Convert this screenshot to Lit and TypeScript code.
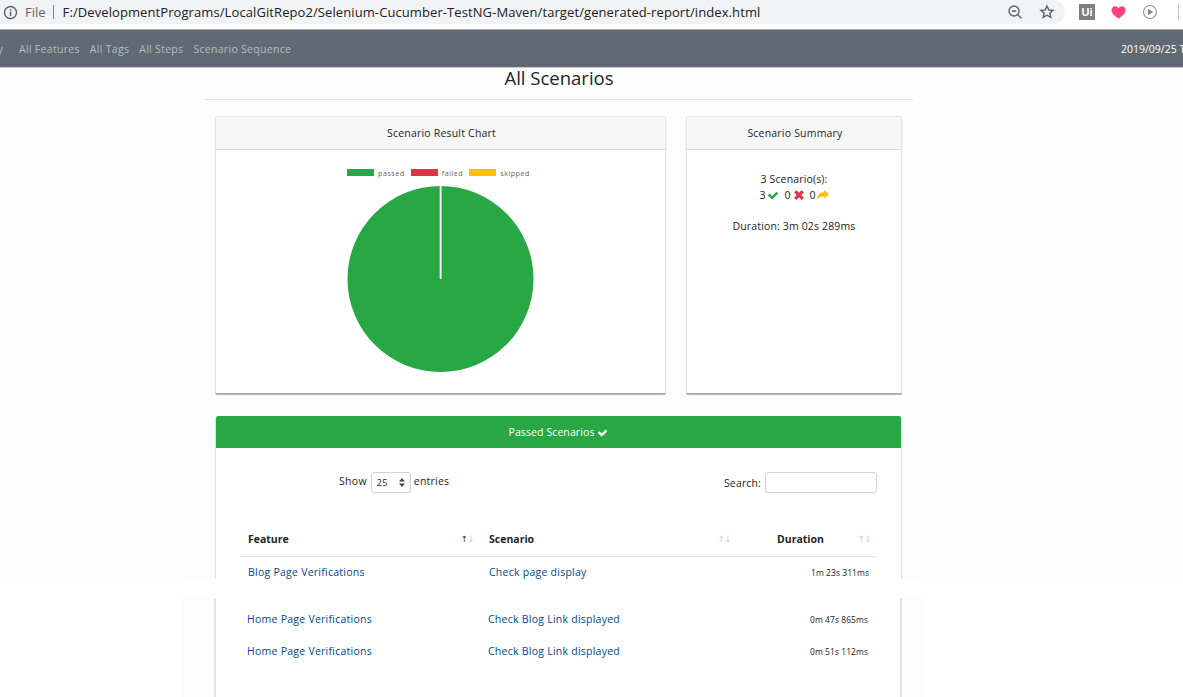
import { LitElement, html, css, svg } from "lit";
import { customElement } from "lit/decorators.js";

const check = html`<svg class="ic" viewBox="0 0 16 16"><path d="M1 8.500 3.500 6l3.500 3.500L12.500 3.500 15 6l-8 8z"/></svg>`;
const times = html`<svg class="ic" viewBox="0 0 16 16"><path d="M1.500 4.500 4.500 1.500 8 5l3.500-3.500 3 3L11 8l3.500 3.500-3 3L8 11l-3.500 3.500-3-3L5 8z"/></svg>`;
const share = html`<svg class="ic wide" viewBox="0 0 16 16"><path d="M15.500 6.500 9.500 1v3C5 4 1 6 .5 14c1.500-3.500 4.500-5 9-5v3z"/></svg>`;

@customElement("app-root")
export class AppRoot extends LitElement {
  static styles = css`
    :host { display: block; width: 1183px; height: 697px; overflow: hidden; background: #fff;
      font-family: "Open Sans", "Noto Sans", sans-serif; font-size: 10.5px; color: #212529; }
    * { box-sizing: border-box; }
    .chrome { height: 29px; display: flex; align-items: flex-start; background: #fff; }
    .omni { width: 1065px; height: 24px; background: #f1f3f4; border-radius: 0 12px 12px 0; display: flex; align-items: center; padding-left: 3px; }
    .omni svg { flex: none; }
    .file { font-size: 13px; color: #5f6368; margin-left: 7px; }
    .vsep { width: 1px; height: 14px; background: #80868b; margin: 0 9px 0 7px; }
    .url { font-size: 13px; color: #202124; white-space: nowrap; letter-spacing: .09px; flex: 1; }
    .tool-a { margin-right: 16px; }
    .tool-b { margin-right: 10px; }
    .exts { display: flex; align-items: center; height: 24px; padding-left: 14px; gap: 15px; }
    .ui { width: 16px; height: 16px; background: #808080; color: #fff; font: bold 11px "Liberation Sans", sans-serif; display: flex; align-items: center; justify-content: center; }
    .csep { width: 1px; height: 16px; background: #ccc; margin-left: 5px; }
    .nav { height: 39px; background: #5f6a74; border-top: 1px solid #a5a8ab; border-bottom: 1px solid #c9cbcd; display: flex; align-items: center; white-space: nowrap; overflow: hidden; color: rgba(255,255,255,.55); letter-spacing: .3px; }
    .nav .clip { width: 3px; overflow: hidden; direction: rtl; margin-right: 16px; }
    .nav .link { margin-right: 10px; }
    .nav .date { margin-left: auto; width: 62px; flex: none; overflow: hidden; color: #fff; letter-spacing: 0; }
    .top { height: 511px; background: #fdfdfd; }
    .wrap { margin-left: 205px; width: 708px; }
    h2 { margin: 0; height: 32px; font-size: 18.500px; font-weight: 400; line-height: 19px; text-align: center; color: #212529; border-bottom: 1px solid #e2e2e2; }
    .cards { display: flex; gap: 20px; margin: 16px 0 22px 10px; }
    .card { background: #fff; border: 1px solid #e3e3e3; border-bottom-color: #aaa; border-radius: 2px; box-shadow: 0 1px 1px rgba(0,0,0,.3); }
    .chart { width: 451px; height: 278px; }
    .summary { width: 216px; height: 278px; text-align: center; }
    .chead { height: 33px; background: #f7f7f7; border-bottom: 1px solid #dcdcdc; display: flex; align-items: center; justify-content: center; letter-spacing: .2px; padding-left: 2px; }
    .legend { display: flex; justify-content: center; align-items: center; gap: 6px; height: 11px; margin-top: 17px; font-size: 7.200px; letter-spacing: .5px; color: #666; padding-right: 4px; }
    .sw { width: 27px; height: 7px; margin-right: -2px; }
    .pie { display: block; margin: 7px auto 0 auto; }
    .sbody { padding-top: 21px; letter-spacing: .15px; line-height: 16px; }
    .sline { display: flex; justify-content: center; align-items: center; }
    .ic { width: 12px; height: 12px; fill: currentColor; display: block; }
    .ic.wide { width: 14px; height: 13px; }
    .sline .n { width: 9px; }
    .sline .g { margin: 0 4px 0 0; }
    .sline .r { margin: 0 3px 0 1px; }
    .sline .y { margin-left: -1px; }
    .dur { margin-top: 15px; }
    .g { color: #28a745; } .r { color: #dc3545; } .y { color: #ffc107; }
    .passed { width: 687px; margin-left: 10px; border-top: 0; border-bottom: 0; border-radius: 3px 3px 0 0; height: 163px; overflow: hidden; }
    .phead { height: 32px; background: #28a745; color: #fff; display: flex; align-items: center; justify-content: center; gap: 2px; letter-spacing: .1px; padding-right: 1px; }
    .phead .ic { width: 11px; height: 11px; }
    .ctrls { display: flex; justify-content: space-between; align-items: center; height: 21px; margin: 24px 24px 0 123px; letter-spacing: .3px; }
    .show { display: flex; align-items: center; gap: 3px; }
    .lbl { margin-top: -3px; }
    .lbl.e { letter-spacing: .2px; }
    .sel { margin-left: 1px; width: 40px; height: 21px; border: 1px solid #ced4da; border-radius: 3px; background: #fff; display: flex; align-items: center; justify-content: space-between; padding: 0 5px; font-size: 9px; }
    .sel svg { display: block; fill: #444; }
    .search { display: flex; align-items: center; gap: 4px; letter-spacing: .15px; }
    .inp { width: 112px; height: 21px; border: 1px solid #ced4da; border-radius: 3px; background: #fff; }
    .row { display: grid; grid-template-columns: 241px 258px 138px; align-items: center; margin-left: 24px; width: 637px; }
    .thead { height: 34px; margin-top: 30px; padding-bottom: 1px; border-bottom: 1px solid #dee2e6; font-weight: 700; color: #212529; }
    .th { padding-left: 8px; display: flex; justify-content: space-between; padding-right: 7px; align-items: center; }
    .th.s { padding-right: 8px; }
    .th.d { padding-left: 38px; padding-right: 6px; }
    .ar { font: 400 8.500px "DejaVu Sans", sans-serif; color: #ccc; letter-spacing: -.5px; }
    .ar b { font-weight: 400; color: #333; }
    .tr { height: 32px; letter-spacing: .25px; }
    .tr a { color: #00479a; padding-left: 8px; text-decoration: none; }
    .tr .t { text-align: right; padding-right: 8px; font-size: 8.500px; letter-spacing: .05px; }
    .r1 { height: 30px; }
    .band { height: 19px; background: #fff; display: flex; align-items: flex-start; }
    .band .a { width: 180px; height: 4px; background: #fdfdfd; }
    .band .b { width: 743px; }
    .band .c { flex: 1; height: 4px; background: #fdfdfd; }
    .bottom { height: 99px; background: #fff; }
    .pale { margin-left: 182px; width: 741px; height: 99px; background: #fdfdfd; padding-left: 32px; }
    .rest { width: 688px; height: 99px; background: #fff; border-left: 2px solid #e3e3e3; border-right: 2px solid #e3e3e3; padding-top: 5px; }
    .rest .row { margin-left: 23px; }
  `;

  render() {
    return html`
      <div class="chrome">
        <div class="omni">
          <svg width="15" height="15" viewBox="0 0 15 15"><circle cx="7.500" cy="7.500" r="6" fill="none" stroke="#5f6368" stroke-width="1.400"/><rect x="6.800" y="6.500" width="1.500" height="4.500" fill="#5f6368"/><rect x="6.800" y="4" width="1.500" height="1.500" fill="#5f6368"/></svg>
          <span class="file">File</span><span class="vsep"></span>
          <span class="url">F:/DevelopmentPrograms/LocalGitRepo2/Selenium-Cucumber-TestNG-Maven/target/generated-report/index.html</span>
          <svg class="tool-a" width="16" height="16" viewBox="0 0 16 16" fill="none" stroke="#5f6368" stroke-width="1.400"><circle cx="7" cy="7" r="5"/><path d="M4.800 7h4.400M10.600 10.600 14.500 14.500"/></svg>
          <svg class="tool-b" width="16" height="16" viewBox="0 0 16 16" fill="none" stroke="#5f6368" stroke-width="1.400"><path d="M8 2l1.800 4 4.200.4-3.200 2.800 1 4.200L8 11.200 4.200 13.400l1-4.200L2 6.400 6.200 6z"/></svg>
        </div>
        <div class="exts">
          <div class="ui">Ui</div>
          <svg width="17" height="16" viewBox="0 0 17 16"><path d="M8.500 14.500C3 11 1.500 8.500 1.500 6c0-2.500 2-3.800 3.600-3.800 1.500 0 2.700.7 3.400 2 .7-1.300 1.900-2 3.400-2 1.600 0 3.600 1.300 3.600 3.800 0 2.500-1.500 5-7 8.500z" fill="#ff4274"/></svg>
          <svg width="16" height="16" viewBox="0 0 16 16"><circle cx="8" cy="8" r="6.500" fill="none" stroke="#9a9a9a" stroke-width="1.200"/><path d="M6 4.800 11.300 8 6 11.200z" fill="#8a8a8a"/></svg>
          <span class="csep"></span>
        </div>
      </div>
      <div class="nav">
        <span class="clip">Summary</span>
        <span class="link">All Features</span><span class="link">All Tags</span><span class="link">All Steps</span><span class="link">Scenario Sequence</span>
        <span class="date">2019/09/25 T</span>
      </div>
      <div class="top">
        <div class="wrap">
          <h2>All Scenarios</h2>
          <div class="cards">
            <div class="card chart">
              <div class="chead">Scenario Result Chart</div>
              <div class="legend">
                <span class="sw" style="background:#28a745"></span><span>passed</span>
                <span class="sw" style="background:#dc3545"></span><span>failed</span>
                <span class="sw" style="background:#ffc107"></span><span>skipped</span>
              </div>
              <svg class="pie" width="188" height="188" viewBox="0 0 188 188">
                ${svg`<circle cx="93.5" cy="94" r="93" fill="#28a745"/><rect x="92.7" y="0" width="1.800" height="94" fill="#fff"/>`}
              </svg>
            </div>
            <div class="card summary">
              <div class="chead">Scenario Summary</div>
              <div class="sbody">
                <div>3 Scenario(s):</div>
                <div class="sline"><span class="n">3</span><span class="g">${check}</span><span class="n">0</span><span class="r">${times}</span><span class="n">0</span><span class="y">${share}</span></div>
                <div class="dur">Duration: 3m 02s 289ms</div>
              </div>
            </div>
          </div>
          <div class="card passed">
            <div class="phead">Passed Scenarios <span>${check}</span></div>
            <div class="ctrls">
              <div class="show"><span class="lbl">Show</span><div class="sel">25 <svg width="6" height="9" viewBox="0 0 6 9"><path d="M3 0 6 3.500H0zM3 9 0 5.500H6z"/></svg></div><span class="lbl e">entries</span></div>
              <div class="search">Search: <div class="inp"></div></div>
            </div>
            <div class="row thead">
              <div class="th">Feature <span class="ar"><b>↑</b>↓</span></div>
              <div class="th s">Scenario <span class="ar">↑↓</span></div>
              <div class="th d">Duration <span class="ar">↑↓</span></div>
            </div>
            <div class="row tr r1"><a>Blog Page Verifications</a><a>Check page display</a><div class="t">1m 23s 311ms</div></div>
          </div>
        </div>
      </div>
      <div class="band"><div class="a"></div><div class="b"></div><div class="c"></div></div>
      <div class="bottom"><div class="pale"><div class="rest">
        <div class="row tr"><a>Home Page Verifications</a><a>Check Blog Link displayed</a><div class="t">0m 47s 865ms</div></div>
        <div class="row tr"><a>Home Page Verifications</a><a>Check Blog Link displayed</a><div class="t">0m 51s 112ms</div></div>
      </div></div></div>
    `;
  }
}
